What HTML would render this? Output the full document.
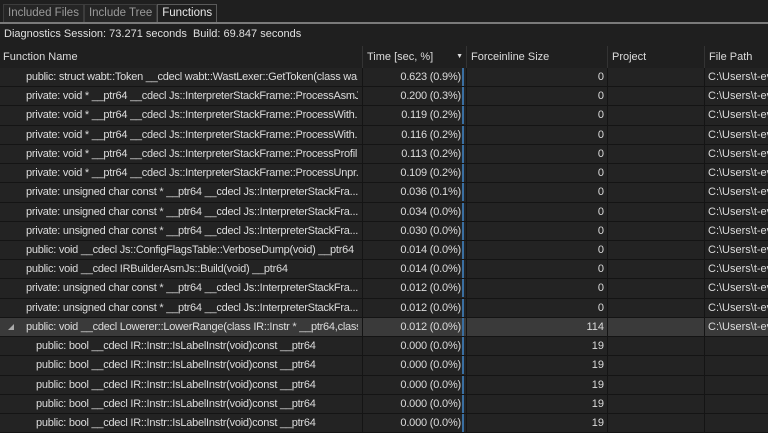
<!DOCTYPE html>
<html><head><style>
body{margin:0;width:768px;height:433px;overflow:hidden;background:#1f1f1f;font-family:"Liberation Sans",sans-serif;font-size:11px;color:#dcdcdc}
.tabs{position:absolute;top:4px;left:3px;height:18px;display:flex;font-size:11.5px}
.tab{border:1px solid #3c3c3c;border-bottom:none;padding:0 4px;line-height:17px;color:#9a9a9a;background:#252525}
.tab.a{color:#e8e8e8;background:#1f1f1f;border-color:#5a5a5a}
.sep{position:absolute;top:22px;left:0;width:768px;height:2px;background:#7a7a7a}
.info{position:absolute;top:28px;left:4px;color:#e0e0e0}
.hdr{position:absolute;top:46px;left:0;width:768px;height:22px;background:#1f1f1f}
.hdr div{position:absolute;top:0;height:22px;line-height:22px;padding-left:4px;border-left:1px solid #333}
.rows{position:absolute;top:68px;left:0;width:768px}
.r{position:relative;height:18.22px;background:#232323;border-bottom:1px solid #141414;white-space:nowrap}
.r.s{background:#3a3a3a}
.r span{position:absolute;top:0;line-height:18px}
.f,.f2{letter-spacing:-0.25px;overflow:hidden;width:332px}
.f{left:26px}
.f2{left:36px}
.t{right:304px;text-align:right;border-right:2px solid #3a6ea0;padding-right:1px;letter-spacing:-0.2px}
.n{right:164px}
.p{left:708px}
.c{position:absolute;top:0;bottom:0;width:1px;background:#141414}
.tri{position:absolute;left:8px;top:6px;width:0;height:0;border-left:6px solid transparent;border-bottom:6px solid #aaa}
</style></head><body>
<div class="tabs"><div class="tab">Included Files</div><div class="tab">Include Tree</div><div class="tab a">Functions</div></div>
<div class="sep"></div>
<div class="info">Diagnostics Session: 73.271 seconds&nbsp; Build: 69.847 seconds</div>
<div class="hdr">
<div style="left:-1px;width:358px;border:none">Function Name</div>
<div style="left:362px;width:99px">Time [sec, %]<span style="position:absolute;right:3px;top:0;font-size:7px">▼</span></div>
<div style="left:466px;width:136px">Forceinline Size</div>
<div style="left:607px;width:92px">Project</div>
<div style="left:704px;width:64px">File Path</div>
</div>
<div class="rows">
<div class="r"><span class="f">public: struct wabt::Token __cdecl wabt::WastLexer::GetToken(class wa...</span><span class="t">0.623 (0.9%)</span><span class="n">0</span><span class="p">C:\Users\t-ev</span></div>
<div class="r"><span class="f">private: void * __ptr64 __cdecl Js::InterpreterStackFrame::ProcessAsmJ...</span><span class="t">0.200 (0.3%)</span><span class="n">0</span><span class="p">C:\Users\t-ev</span></div>
<div class="r"><span class="f">private: void * __ptr64 __cdecl Js::InterpreterStackFrame::ProcessWith...</span><span class="t">0.119 (0.2%)</span><span class="n">0</span><span class="p">C:\Users\t-ev</span></div>
<div class="r"><span class="f">private: void * __ptr64 __cdecl Js::InterpreterStackFrame::ProcessWith...</span><span class="t">0.116 (0.2%)</span><span class="n">0</span><span class="p">C:\Users\t-ev</span></div>
<div class="r"><span class="f">private: void * __ptr64 __cdecl Js::InterpreterStackFrame::ProcessProfil...</span><span class="t">0.113 (0.2%)</span><span class="n">0</span><span class="p">C:\Users\t-ev</span></div>
<div class="r"><span class="f">private: void * __ptr64 __cdecl Js::InterpreterStackFrame::ProcessUnpr...</span><span class="t">0.109 (0.2%)</span><span class="n">0</span><span class="p">C:\Users\t-ev</span></div>
<div class="r"><span class="f">private: unsigned char const * __ptr64 __cdecl Js::InterpreterStackFra...</span><span class="t">0.036 (0.1%)</span><span class="n">0</span><span class="p">C:\Users\t-ev</span></div>
<div class="r"><span class="f">private: unsigned char const * __ptr64 __cdecl Js::InterpreterStackFra...</span><span class="t">0.034 (0.0%)</span><span class="n">0</span><span class="p">C:\Users\t-ev</span></div>
<div class="r"><span class="f">private: unsigned char const * __ptr64 __cdecl Js::InterpreterStackFra...</span><span class="t">0.030 (0.0%)</span><span class="n">0</span><span class="p">C:\Users\t-ev</span></div>
<div class="r"><span class="f">public: void __cdecl Js::ConfigFlagsTable::VerboseDump(void) __ptr64</span><span class="t">0.014 (0.0%)</span><span class="n">0</span><span class="p">C:\Users\t-ev</span></div>
<div class="r"><span class="f">public: void __cdecl IRBuilderAsmJs::Build(void) __ptr64</span><span class="t">0.014 (0.0%)</span><span class="n">0</span><span class="p">C:\Users\t-ev</span></div>
<div class="r"><span class="f">private: unsigned char const * __ptr64 __cdecl Js::InterpreterStackFra...</span><span class="t">0.012 (0.0%)</span><span class="n">0</span><span class="p">C:\Users\t-ev</span></div>
<div class="r"><span class="f">private: unsigned char const * __ptr64 __cdecl Js::InterpreterStackFra...</span><span class="t">0.012 (0.0%)</span><span class="n">0</span><span class="p">C:\Users\t-ev</span></div>
<div class="r s"><div class="tri"></div><span class="f">public: void __cdecl Lowerer::LowerRange(class IR::Instr * __ptr64,class...</span><span class="t">0.012 (0.0%)</span><span class="n">114</span><span class="p">C:\Users\t-ev</span></div>
<div class="r"><span class="f2">public: bool __cdecl IR::Instr::IsLabelInstr(void)const __ptr64</span><span class="t">0.000 (0.0%)</span><span class="n">19</span></div>
<div class="r"><span class="f2">public: bool __cdecl IR::Instr::IsLabelInstr(void)const __ptr64</span><span class="t">0.000 (0.0%)</span><span class="n">19</span></div>
<div class="r"><span class="f2">public: bool __cdecl IR::Instr::IsLabelInstr(void)const __ptr64</span><span class="t">0.000 (0.0%)</span><span class="n">19</span></div>
<div class="r"><span class="f2">public: bool __cdecl IR::Instr::IsLabelInstr(void)const __ptr64</span><span class="t">0.000 (0.0%)</span><span class="n">19</span></div>
<div class="r"><span class="f2">public: bool __cdecl IR::Instr::IsLabelInstr(void)const __ptr64</span><span class="t">0.000 (0.0%)</span><span class="n">19</span></div>
<div class="c" style="left:362px"></div><div class="c" style="left:466px"></div><div class="c" style="left:607px"></div><div class="c" style="left:704px"></div>
</div>
</body></html>
